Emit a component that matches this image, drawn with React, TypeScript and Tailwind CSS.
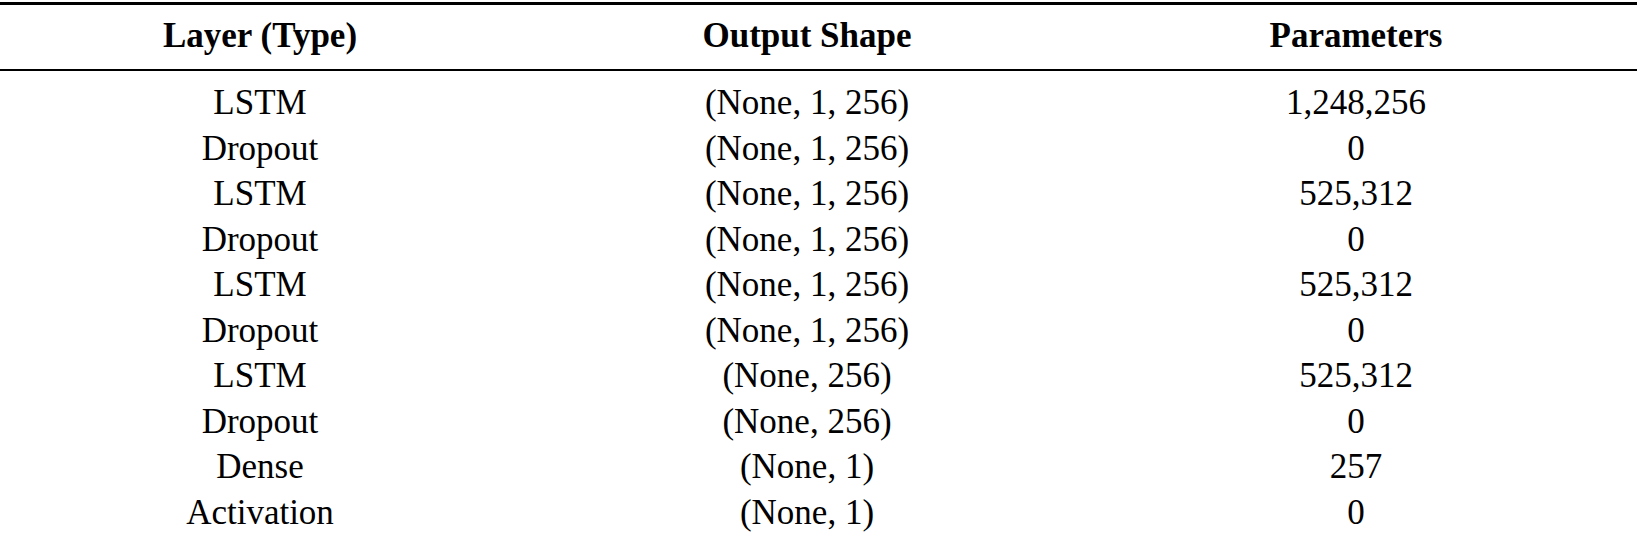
const rows = [
  ['LSTM', '(None, 1, 256)', '1,248,256'],
  ['Dropout', '(None, 1, 256)', '0'],
  ['LSTM', '(None, 1, 256)', '525,312'],
  ['Dropout', '(None, 1, 256)', '0'],
  ['LSTM', '(None, 1, 256)', '525,312'],
  ['Dropout', '(None, 1, 256)', '0'],
  ['LSTM', '(None, 256)', '525,312'],
  ['Dropout', '(None, 256)', '0'],
  ['Dense', '(None, 1)', '257'],
  ['Activation', '(None, 1)', '0'],
];

export default function App() {
  return (
    <div className="bg-white w-[1640px] h-[547px] pt-[2px] text-black font-['Liberation_Serif',serif] text-[35px] leading-[45.5px]">
      <div className="w-[1637px]">
        {/* Header */}
        <div className="grid grid-cols-[520px_574px_524px] border-t-[3px] border-b-[2px] border-black pt-[8px] pb-[10.5px] font-bold">
          <div className="text-center">Layer (Type)</div>
          <div className="text-center">Output Shape</div>
          <div className="text-center">Parameters</div>
        </div>

        {/* Body */}
        <div className="pt-[9px]">
          {rows.map((r, i) => (
            <div key={i} className="grid grid-cols-[520px_574px_524px]">
              <div className="text-center">{r[0]}</div>
              <div className="text-center">{r[1]}</div>
              <div className="text-center">{r[2]}</div>
            </div>
          ))}
        </div>
      </div>
    </div>
  );
}
